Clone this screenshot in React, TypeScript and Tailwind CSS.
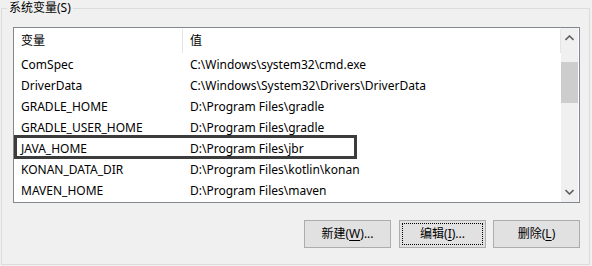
import React from 'react';

const ROWS = [
  { name: 'ComSpec', value: 'C:\\Windows\\system32\\cmd.exe' },
  { name: 'DriverData', value: 'C:\\Windows\\System32\\Drivers\\DriverData' },
  { name: 'GRADLE_HOME', value: 'D:\\Program Files\\gradle' },
  { name: 'GRADLE_USER_HOME', value: 'D:\\Program Files\\gradle' },
  { name: 'JAVA_HOME', value: 'D:\\Program Files\\jbr' },
  { name: 'KONAN_DATA_DIR', value: 'D:\\Program Files\\kotlin\\konan' },
  { name: 'MAVEN_HOME', value: 'D:\\Program Files\\maven' },
];

const Chevron = ({ up }: { up?: boolean }) => (
  <svg width="9" height="6" viewBox="0 0 9 6" className={up ? '' : 'rotate-180'}>
    <path d="M0.5 5 L4.5 1 L8.5 5" fill="none" stroke="#606060" strokeWidth="1.6" />
  </svg>
);

const WinButton = ({ label, mnemonic, suffix, focused }: { label: string; mnemonic: string; suffix: string; focused?: boolean }) => (
  <button className="relative w-[87px] h-[28px] border border-[#adadad] bg-[#e1e1e1] text-[12px] text-black flex items-center justify-center">
    {focused && <span className="absolute inset-[2px] border border-dotted border-black" />}
    <span>
      {label}(<span className="underline underline-offset-2">{mnemonic}</span>){suffix}
    </span>
  </button>
);

export default function App() {
  return (
    <div
      className="w-[592px] h-[266px] bg-[#f0f0f0] pt-[8px] pl-[1px] text-black"
      style={{ fontFamily: '"Noto Sans", "Noto Sans CJK SC", sans-serif' }}
    >
      {/* group box */}
      <div className="relative w-[589px] h-[257px] border border-[#dcdcdc] pl-[11px] pt-[18px]">
        <span className="absolute -top-[10px] left-[5px] px-[2px] bg-[#f0f0f0] text-[12px] leading-[18px]">
          系统变量(S)
        </span>

        {/* list view */}
        <div className="relative w-[567px] h-[176px] border border-[#828790] bg-white flex">
          <div className="w-[547px] flex flex-col text-[12px]">
            <div className="h-[26px] flex items-center">
              <div className="w-[168px] pl-[7px]">变量</div>
              <div className="w-[1px] h-[24px] bg-[#e5e5e5]" />
              <div className="flex-1 pl-[7px]">值</div>
              <div className="w-[1px] h-[24px] bg-[#e5e5e5]" />
            </div>
            {ROWS.map((row) => (
              <div key={row.name} className="h-[21px] flex items-center whitespace-nowrap">
                <div className="w-[169px] pl-[7px]">{row.name}</div>
                <div className="flex-1 pl-[7px]">{row.value}</div>
              </div>
            ))}
          </div>

          {/* scrollbar */}
          <div className="w-[17px] bg-[#f0f0f0] flex flex-col">
            <div className="h-[20px] flex items-center justify-center">
              <Chevron up />
            </div>
            <div className="flex-1 pt-[14px] flex justify-center">
              <div className="w-[17px] h-[41px] bg-[#cdcdcd]" />
            </div>
            <div className="h-[20px] flex items-center justify-center">
              <Chevron />
            </div>
          </div>

          {/* highlight annotation */}
          <div className="absolute left-0 top-[107px] w-[343px] h-[24px] border-[3px] border-[#3c3c3c]" />
        </div>

        {/* buttons */}
        <div className="w-[567px] mt-[17px] flex justify-end">
          <WinButton label="新建" mnemonic="W" suffix="..." />
          <div className="w-[8px]" />
          <WinButton label="编辑" mnemonic="I" suffix="..." focused />
          <div className="w-[7px]" />
          <WinButton label="删除" mnemonic="L" suffix="" />
        </div>
      </div>
    </div>
  );
}
